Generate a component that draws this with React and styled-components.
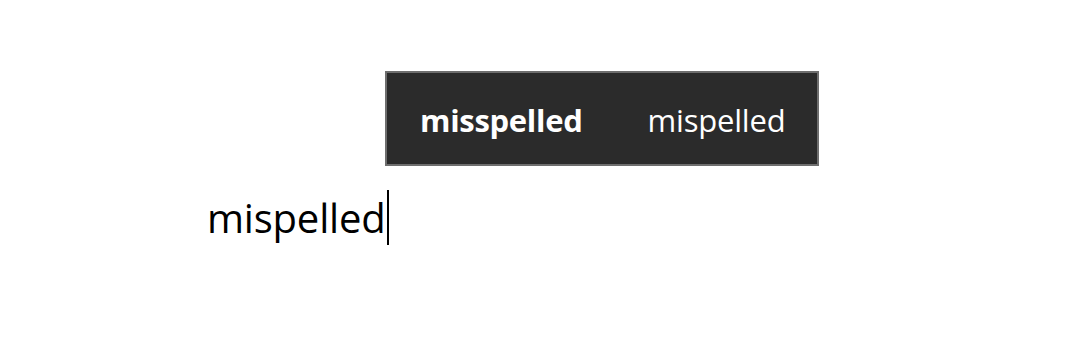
import styled, { createGlobalStyle } from 'styled-components';

const GlobalStyle = createGlobalStyle`
  * { box-sizing: border-box; }
  html, body { margin: 0; background: #ffffff; }
`;

const Page = styled.div`
  width: 1085px;
  height: 342px;
  font-family: 'Open Sans', 'Noto Sans', sans-serif;
  display: flex;
  flex-direction: column;
  padding: 71px 0 0 207px;
`;

const Suggestions = styled.div`
  margin-left: 178px;
  width: 434px;
  height: 95px;
  background: #2b2b2b;
  border: 2px solid #6e6e6e;
  display: flex;
  align-items: center;
  padding: 2px 0 0 33px;
  gap: 65px;
`;

const Option = styled.span`
  color: #ffffff;
  font-size: 31px;
  letter-spacing: ${(p) => (p.$bold ? '-0.3px' : '-0.2px')};
  font-weight: ${(p) => (p.$bold ? 700 : 400)};
`;

const Editor = styled.div`
  margin-top: 24px;
  display: flex;
  align-items: center;
`;

const Word = styled.span`
  font-size: 40px;
  color: #000000;
  letter-spacing: -0.2px;
  line-height: 55px;
`;

const Caret = styled.span`
  width: 2px;
  height: 55px;
  margin-left: 2px;
  background: #000000;
`;

export default function App() {
  return (
    <>
      <GlobalStyle />
      <Page>
        <Suggestions>
          <Option $bold>misspelled</Option>
          <Option>mispelled</Option>
        </Suggestions>
        <Editor>
          <Word>mispelled</Word>
          <Caret />
        </Editor>
      </Page>
    </>
  );
}
